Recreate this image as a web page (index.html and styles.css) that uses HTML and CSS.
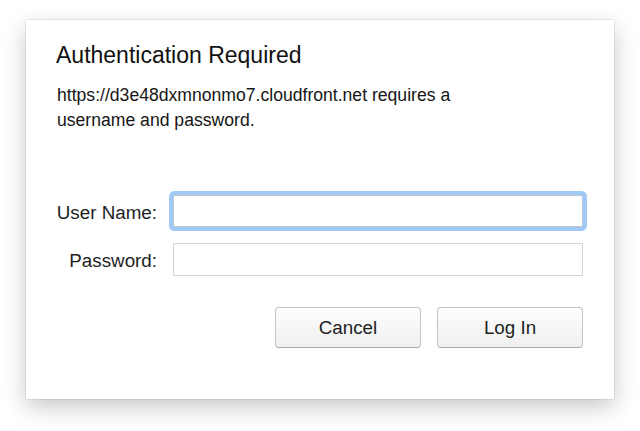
FILE: index.html
```html
<!DOCTYPE html>
<html>
<head>
<meta charset="utf-8">
<link rel="stylesheet" href="styles.css">
</head>
<body>
<div class="stage">
  <div class="dialog">
    <h1 class="title">Authentication Required</h1>
    <p class="message">https://d3e48dxmnonmo7.cloudfront.net requires a<br>username and password.</p>
    <form class="form">
      <label class="label" for="user">User Name:</label>
      <input class="field focused" id="user" type="text">
      <label class="label" for="pass">Password:</label>
      <input class="field tall" id="pass" type="password">
    </form>
    <div class="actions">
      <button class="btn" type="button">Cancel</button>
      <button class="btn" type="button">Log In</button>
    </div>
  </div>
</div>
</body>
</html>
```
FILE: styles.css
```css
html, body {
  margin: 0;
  padding: 0;
  background: #ffffff;
  width: 640px;
  height: 431px;
  overflow: hidden;
}
body {
  font-family: "Liberation Sans", Arial, sans-serif;
  color: #1b1b1b;
}
.stage {
  padding: 20px 26px 0 26px;
}
.dialog {
  box-sizing: border-box;
  width: 588px;
  height: 379px;
  background: #ffffff;
  box-shadow: 0 0 1px rgba(0,0,0,0.35), 0 8px 22px rgba(0,0,0,0.22);
  padding: 21px 31px 0 30px;
}
.title {
  margin: 0;
  font-size: 23px;
  font-weight: normal;
  line-height: 28px;
  color: #111;
}
.message {
  margin: 14px 0 0 1px;
  font-size: 17.6px;
  line-height: 25px;
  color: #161616;
}
.form {
  margin: 62px 0 0 0;
  display: grid;
  grid-template-columns: 1fr 410px;
  column-gap: 16px;
  row-gap: 16px;
  align-items: center;
}
.label {
  justify-self: end;
  font-size: 18.8px;
  color: #1e1e1e;
  padding-top: 3px;
}
.field {
  box-sizing: border-box;
  width: 410px;
  height: 32px;
  margin: 0;
  border: 1px solid #d2d2d2;
  border-radius: 1px;
  background: #fff;
  outline: none;
  font: inherit;
}
.field.tall {
  height: 33px;
}
.field.focused {
  border-color: #b9c7d6;
  box-shadow: 0 0 0 4px #a1c9f6;
  border-radius: 2px;
}
.actions {
  margin-top: 31px;
  display: flex;
  justify-content: flex-end;
  gap: 16px;
}
.btn {
  box-sizing: border-box;
  width: 146px;
  height: 41px;
  border: 1px solid #c3c3c3;
  border-bottom-color: #ababab;
  border-radius: 4px;
  background: linear-gradient(#fdfdfd, #f0f0f0);
  font-family: "Liberation Sans", Arial, sans-serif;
  font-size: 18.8px;
  color: #1e1e1e;
  padding: 0;
}
```
